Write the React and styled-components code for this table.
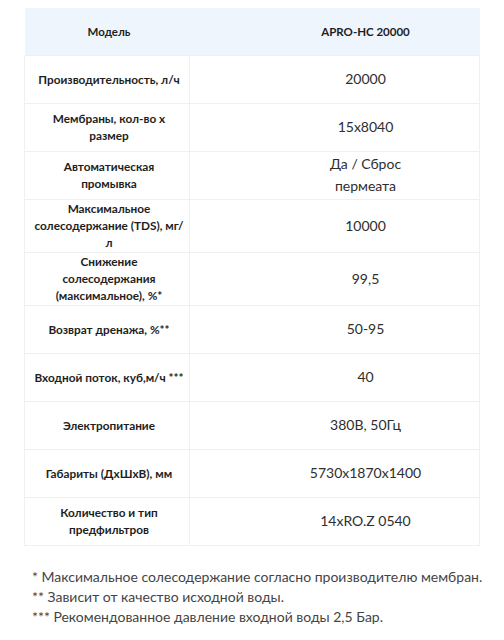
import React from "react";
import styled, { createGlobalStyle } from "styled-components";

const GlobalStyle = createGlobalStyle`
  body {
    margin: 0;
    background: #fff;
    font-family: Lato, "Liberation Sans", sans-serif;
  }
`;

const rows = [
	{ label: ["Производительность, л/ч"], value: ["20000"] },
	{ label: ["Мембраны, кол-во х", "размер"], value: ["15x8040"] },
	{ label: ["Автоматическая", "промывка"], value: ["Да / Сброс", "пермеата"] },
	{ label: ["Максимальное", "солесодержание (TDS), мг/", "л"], value: ["10000"], tall: true },
	{ label: ["Снижение", "солесодержания", "(максимальное), %*"], value: ["99,5"], tall: true },
	{ label: ["Возврат дренажа, %**"], value: ["50-95"] },
	{ label: ["Входной поток, куб,м/ч ***"], value: ["40"] },
	{ label: ["Электропитание"], value: ["380В, 50Гц"] },
	{ label: ["Габариты (ДхШхВ), мм"], value: ["5730x1870x1400"] },
	{ label: ["Количество и тип", "предфильтров"], value: ["14xRO.Z 0540"] },
];

const notes = [
	"* Максимальное солесодержание согласно производителю мембран.",
	"** Зависит от качество исходной воды.",
	"*** Рекомендованное давление входной воды 2,5 Бар.",
];

const Lines = ({ lines }) =>
	lines.map((line, i) => (
		<React.Fragment key={i}>
			{i > 0 && <br />}
			{line}
		</React.Fragment>
	));

const App = () => {
	return (
		<Page>
			<GlobalStyle />
			<Table>
				<thead>
					<tr>
						<HeadCell>Модель</HeadCell>
						<HeadCell $value>APRO-HC 20000</HeadCell>
					</tr>
				</thead>
				<tbody>
					{rows.map((row) => (
						<Row key={row.label.join(" ")} $tall={row.tall}>
							<Label>
								<Lines lines={row.label} />
							</Label>
							<Value>
								<Lines lines={row.value} />
							</Value>
						</Row>
					))}
				</tbody>
			</Table>
			<Notes>
				{notes.map((n) => (
					<Note key={n}>{n}</Note>
				))}
			</Notes>
		</Page>
	);
};

export default App;

const Page = styled.div`
	padding: 8px 12px 0 24px;
	width: 504px;
	box-sizing: border-box;
`;

const Table = styled.table`
	width: 456px;
	border-collapse: collapse;
	table-layout: fixed;
`;

const HeadCell = styled.th`
	box-sizing: border-box;
	background: #eef5fd;
	height: 47px;
	padding: ${(p) => (p.$value ? "0 0 0 62px" : "0 0 0 4px")};
	width: ${(p) => (p.$value ? "auto" : "165px")};
	font-size: 11.5px;
	font-weight: 700;
	color: #1e1e1e;
	text-align: center;
`;

const Row = styled.tr`
	height: ${(p) => (p.$tall ? "53px" : "48px")};
`;

const Label = styled.td`
	box-sizing: border-box;
	border: 1px solid #f0f0f0;
	padding: 0 0 0 4px;
	font-size: 11.8px;
	font-weight: 700;
	line-height: 17px;
	color: #1e1e1e;
	text-align: center;
	white-space: nowrap;
`;

const Value = styled.td`
	box-sizing: border-box;
	border: 1px solid #f0f0f0;
	padding: 0 0 0 62px;
	font-size: 14px;
	line-height: 22px;
	color: #2e2e2e;
	text-align: center;
	white-space: nowrap;
`;

const Notes = styled.div`
	margin-top: 21px;
	padding-left: 8px;
`;

const Note = styled.div`
	font-size: 14px;
	line-height: 20px;
	color: #444;
	white-space: nowrap;
`;
